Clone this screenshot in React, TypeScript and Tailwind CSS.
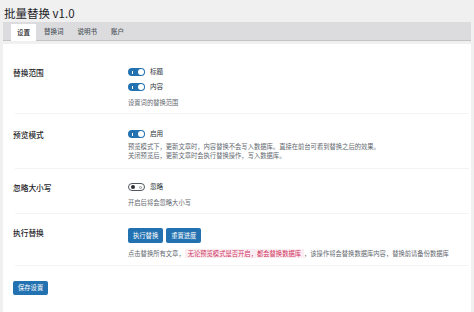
import React from "react";

const font = {
  fontFamily: '"Noto Sans CJK SC", "Noto Sans", sans-serif',
};

function Toggle({ on }: { on: boolean }) {
  if (on) {
    return (
      <span className="relative inline-block h-[8px] w-[17px] rounded-full bg-[#2271b1]">
        <span className="absolute left-[4px] top-[2.5px] h-[3px] w-[1px] bg-white" />
        <span className="absolute right-[1px] top-[1px] h-[6px] w-[6px] rounded-full bg-white" />
      </span>
    );
  }
  return (
    <span className="relative inline-block h-[8px] w-[17px] rounded-full border border-[#50575e] bg-white">
      <span className="absolute left-[2px] top-[1px] h-[4px] w-[4px] rounded-full bg-[#2c3338]" />
      <span className="absolute right-[2px] top-[1.5px] h-[3px] w-[3px] rounded-full border border-[#8c8f94]" />
    </span>
  );
}

function ToggleRow({ on, text }: { on: boolean; text: string }) {
  return (
    <div className="flex h-[15px] items-center gap-[5px]">
      <Toggle on={on} />
      <span className="text-[6.6px] text-[#2c3338]">{text}</span>
    </div>
  );
}

function Divider() {
  return <div className="ml-[2px] mr-[-8px] h-px bg-[#f3f3f4]" />;
}

const Label = ({ children, lh }: { children: React.ReactNode; lh: string }) => (
  <div className={`w-[115px] shrink-0 text-[7.7px] font-medium text-[#1d2327] ${lh}`}>
    {children}
  </div>
);

export default function App() {
  return (
    <div className="h-[312px] w-[474px] overflow-hidden bg-[#f0f0f1]" style={font}>
      <h1 className="h-[22px] pl-[4px] pt-[4px] text-[11.5px] font-normal leading-[18px] text-[#1d2327]">
        批量替换 v1.0
      </h1>
      <div className="mx-[3px] flex h-[19px] items-end gap-[2px] border-b border-[#c3c4c7] bg-[#dcdcde] pl-[8px]">
        <div className="-mb-px flex h-[17px] items-center bg-white px-[6px] text-[6.5px] font-medium text-[#1d2327]">
          设置
        </div>
        <div className="flex h-[17px] items-center px-[6px] text-[6.5px] font-medium text-[#50575e]">
          替换词
        </div>
        <div className="flex h-[17px] items-center px-[6px] text-[6.5px] font-medium text-[#50575e]">
          说明书
        </div>
        <div className="flex h-[17px] items-center px-[6px] text-[6.5px] font-medium text-[#50575e]">
          账户
        </div>
      </div>
      <div className="mx-[3px] mt-[3px] h-[300px] bg-white px-[10px] pt-[20.5px]">
        <div className="flex pb-[6px]">
          <Label lh="leading-[15px]">替换范围</Label>
          <div>
            <ToggleRow on text="标题" />
            <ToggleRow on text="内容" />
            <p className="mt-[3px] text-[6.3px] leading-[9px] text-[#646970]">设置词的替换范围</p>
          </div>
        </div>
        <Divider />
        <div className="flex pb-[8.5px] pt-[13px]">
          <Label lh="leading-[15px]">预览模式</Label>
          <div>
            <ToggleRow on text="启用" />
            <p className="text-[6.3px] leading-[9px] text-[#646970]">
              预览模式下，更新文章时，内容替换不会写入数据库。直接在前台可看到替换之后的效果。
              <br />
              关闭预览后，更新文章时会执行替换操作，写入数据库。
            </p>
          </div>
        </div>
        <Divider />
        <div className="flex pb-[6.5px] pt-[10.5px]">
          <Label lh="leading-[15px]">忽略大小写</Label>
          <div>
            <ToggleRow on={false} text="忽略" />
            <p className="mt-[3px] text-[6.3px] leading-[9px] text-[#646970]">开启后将会忽略大小写</p>
          </div>
        </div>
        <Divider />
        <div className="flex pb-[7.5px] pt-[14px]">
          <Label lh="leading-[10px]">执行替换</Label>
          <div>
            <div className="flex gap-[3px]">
              <button className="h-[15px] rounded-[2px] bg-[#2271b1] px-[5px] text-[6.3px] text-white">
                执行替换
              </button>
              <button className="h-[15px] rounded-[2px] bg-[#2271b1] px-[5px] text-[6.3px] text-white">
                重置进度
              </button>
            </div>
            <p className="mt-[5.5px] whitespace-nowrap text-[6.3px] leading-[9px] text-[#646970]">
              点击替换所有文章，
              <span className="bg-[#fbeef2] px-[3px] text-[#d1335f]">无论预览模式是否开启，都会替换数据库</span>
              ，该操作将会替换数据库内容，替换前请备份数据库
            </p>
          </div>
        </div>
        <Divider />
        <button className="mt-[15px] h-[13.5px] rounded-[2px] bg-[#2271b1] px-[5px] text-[6.3px] text-white">
          保存设置
        </button>
      </div>
    </div>
  );
}
